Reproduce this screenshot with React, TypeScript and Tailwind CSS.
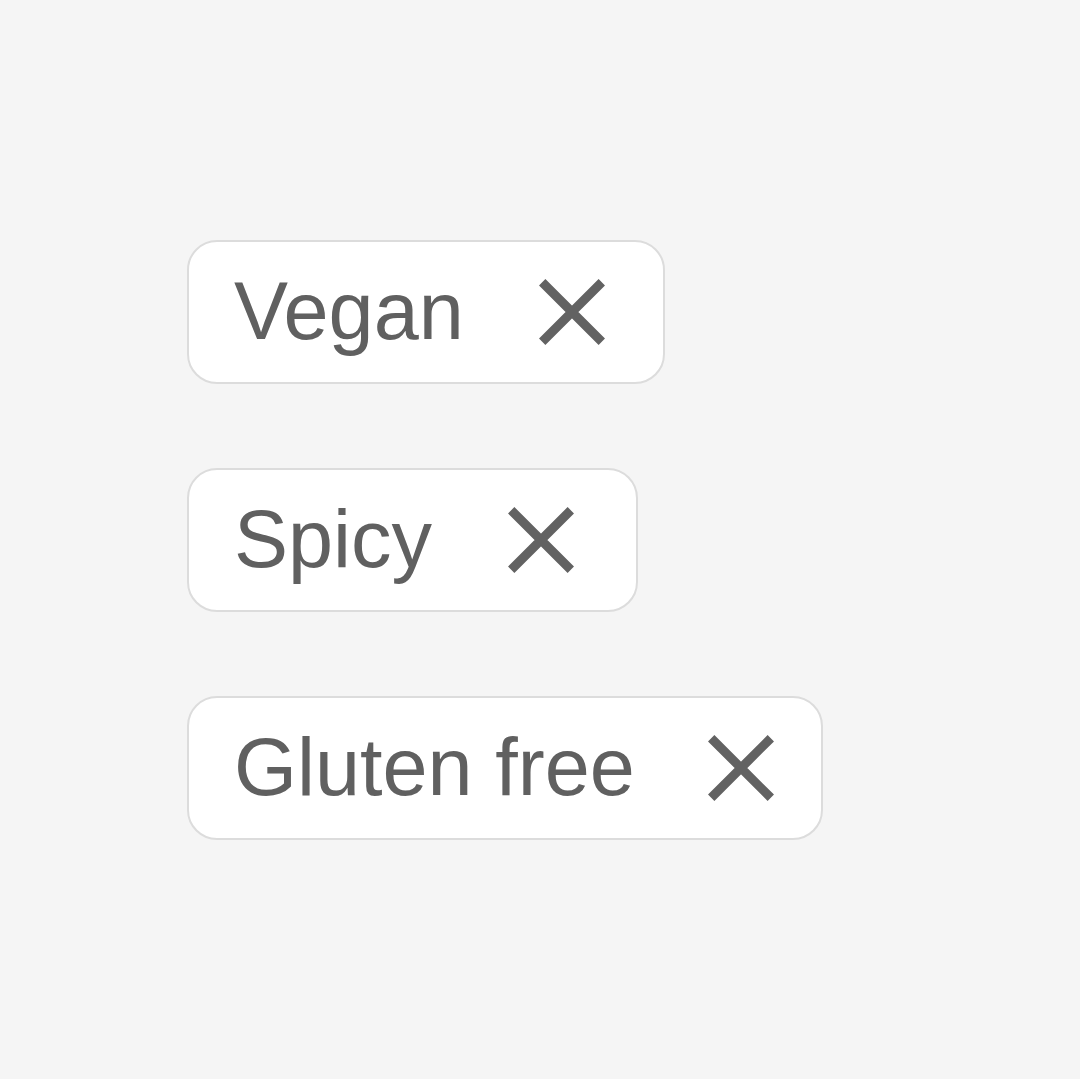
const tags = [
  { label: "Vegan", space: "gap-[75px] pr-[58px]" },
  { label: "Spicy", space: "gap-[76px] pr-[62px]" },
  { label: "Gluten free", space: "gap-[73px] pr-[47px]" },
];

const CloseIcon = () => (
  <svg width="66" height="66" viewBox="0 0 66 66" className="shrink-0 overflow-visible" aria-hidden>
    <path d="M3.2 3.2 L62.8 62.8 M62.8 3.2 L3.2 62.8" stroke="#626262" strokeWidth="9" fill="none" />
  </svg>
);

const Tag = ({ label, space }: { label: string; space: string }) => (
  <div className={`flex h-[144px] items-center rounded-[30px] border-2 border-[#dcdcdc] bg-white pl-[45px] ${space}`}>
    <span className="text-[81px] leading-none text-[#606060] [font-family:'Liberation_Sans',Arial,sans-serif]">
      {label}
    </span>
    <CloseIcon />
  </div>
);

export default function App() {
  return (
    <div className="flex min-h-[1079px] w-full items-center bg-[#f5f5f5] pl-[187px]">
      <div className="flex flex-col items-start gap-[84px]">
        {tags.map((t) => (
          <Tag key={t.label} label={t.label} space={t.space} />
        ))}
      </div>
    </div>
  );
}
